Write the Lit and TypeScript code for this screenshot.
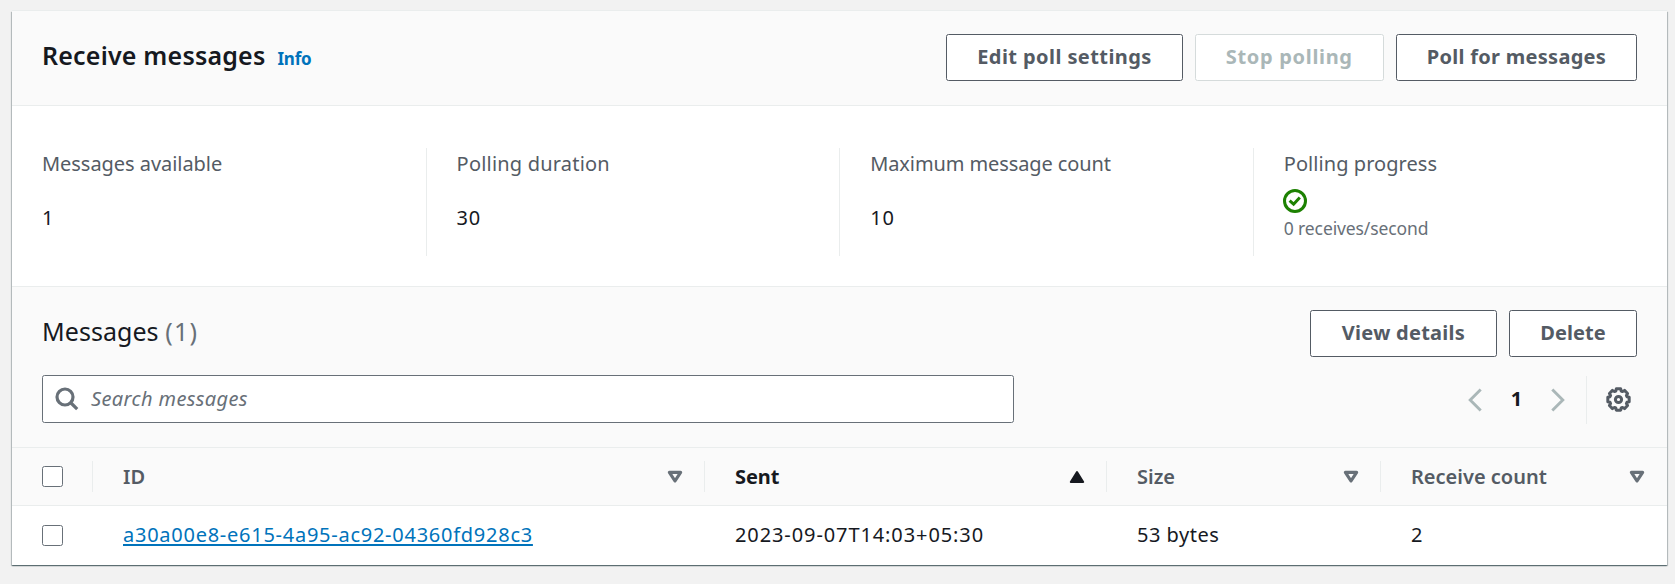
import { LitElement, html, css, svg } from "lit";
import { customElement, property } from "lit/decorators.js";

@customElement("sort-icon")
class SortIcon extends LitElement {
  @property({ type: Boolean }) active = false;
  static styles = css`
    :host { display: block; width: 16px; height: 14px; }
    svg { display: block; }
  `;
  render() {
    return html`<svg width="16" height="14" viewBox="0 0 16 14">
      ${this.active
        ? svg`<path d="M8 2 14.2 12H1.8Z" fill="#16191f" stroke="#16191f" stroke-width="2" stroke-linejoin="round"/>`
        : svg`<path d="M2.4 2.3h11.2L8 11Z" fill="none" stroke="#687078" stroke-width="3.2" stroke-linejoin="round"/>`}
    </svg>`;
  }
}

@customElement("app-root")
class AppRoot extends LitElement {
  static styles = css`
    :host {
      display: block;
      box-sizing: border-box;
      height: 584px;
      padding: 11px 8px 0 12px;
      background: #f2f2f2;
      font-family: "Noto Sans", "Open Sans", sans-serif;
      font-size: 20px;
      line-height: 28px;
      color: #16191f;
      overflow: hidden;
    }
    * { box-sizing: border-box; }
    svg { display: block; flex: none; }
    .card {
      height: 554px;
      background: #fff;
      box-shadow: 0 -1px 0 #eaeded, 0 1px 1px rgba(0, 28, 36, 0.4),
        1px 1px 1px rgba(0, 28, 36, 0.2), -1px 1px 1px rgba(0, 28, 36, 0.2);
    }
    .header {
      display: flex;
      justify-content: space-between;
      height: 95px;
      padding: 23px 30px 0 30px;
      background: #fafafa;
      border-bottom: 1px solid #eaeded;
    }
    h2 {
      margin: 0;
      display: flex;
      align-items: baseline;
      font-size: 25px;
      line-height: 42px;
      font-weight: 600;
      letter-spacing: 0.2px;
      white-space: pre;
    }
    .info {
      margin-left: 12px;
      font-size: 17px;
      font-weight: 700;
      letter-spacing: -0.2px;
      color: #0073bb;
    }
    .actions { display: flex; gap: 12.5px; }
    .btn {
      height: 47px;
      padding: 0 0 2px;
      font: inherit;
      font-weight: 700;
      color: #545b64;
      background: #fff;
      border: 1px solid #545b64;
      border-radius: 2.5px;
      white-space: nowrap;
    }
    .edit { width: 237px; letter-spacing: 0.42px; padding-left: 1px; }
    .stop { width: 188.5px; letter-spacing: 0.68px; color: #aab7b8; border-color: #d5dbdb; }
    .poll { width: 241px; letter-spacing: 0.28px; }
    .view { width: 187px; letter-spacing: 0.27px; padding-left: 1px; }
    .delete { width: 128px; letter-spacing: 0.06px; }
    .metrics {
      display: grid;
      grid-template-columns: repeat(4, 413.6px);
      height: 180px;
      padding: 42px 0 30px;
    }
    .metric { padding: 2px 0 0 30px; height: 108px; }
    .metric + .metric { border-left: 1px solid #eaeded; }
    .label { color: #545b64; }
    .value { margin-top: 26px; }
    .ok { margin: 11px 0 0 -0.5px; }
    .rate { margin-top: 2px; font-size: 17.5px; line-height: 26px; letter-spacing: -0.12px; color: #687078; }
    .t-avail { letter-spacing: -0.05px; }
    .t-dur { letter-spacing: 0.2px; }
    .t-max { letter-spacing: -0.1px; }
    .t-prog { letter-spacing: 0.06px; }
    .t-num { letter-spacing: 0.8px; }
    .toolbar {
      height: 162px;
      padding: 23px 30px 0 30px;
      background: #fafafa;
      border-top: 1px solid #eaeded;
      border-bottom: 1px solid #eaeded;
    }
    .row { display: flex; justify-content: space-between; }
    .row h3 { margin: 0; font-size: 25px; line-height: 42px; font-weight: 400; white-space: pre; letter-spacing: 0.05px; }
    .count { color: #687078; letter-spacing: 1.3px; }
    .filters { margin-top: 18px; height: 48px; }
    .search {
      display: flex;
      align-items: center;
      width: 972px;
      padding: 0 12px;
      gap: 12px;
      background: #fff;
      border: 1px solid #687078;
      border-radius: 2.5px;
      color: #687078;
      font-style: italic;
    }
    .placeholder { letter-spacing: 0.38px; }
    .pages { display: flex; align-items: center; padding: 1px 6px 0 0; }
    .page { width: 69px; text-align: center; font-weight: 700; padding-bottom: 1px; }
    .gear { display: flex; align-items: center; height: 48px; margin-left: 21px; padding-left: 19px; border-left: 1px solid #eaeded; }
    .grid { display: grid; grid-template-columns: 80px 612px 402px 274px 1fr; align-items: center; }
    .thead { height: 58px; background: #fafafa; border-bottom: 1px solid #eaeded; }
    .th {
      display: flex;
      align-items: center;
      justify-content: space-between;
      height: 31px;
      padding: 0 21.5px 0 30px;
      border-left: 1px solid #eaeded;
      font-weight: 600;
      color: #545b64;
    }
    .th.sorted { color: #16191f; font-weight: 700; letter-spacing: -0.1px; }
    .th:last-child { padding-right: 22px; }
    .pick { padding-left: 30px; }
    .box { width: 21px; height: 21px; background: #fff; border: 1.4px solid #687078; border-radius: 2.5px; }
    .tbody { height: 60px; padding-bottom: 1px; }
    .td { padding-left: 31px; padding-bottom: 1px; white-space: nowrap; }
    .id { color: #0073bb; letter-spacing: 0.74px; text-decoration: underline; text-decoration-thickness: 2px; text-underline-offset: 2px; text-decoration-skip-ink: none; }
    .date { letter-spacing: 0.9px; }
    .size { letter-spacing: 0.5px; }
  `;

  private cols = [
    { name: "ID", sorted: false },
    { name: "Sent", sorted: true },
    { name: "Size", sorted: false },
    { name: "Receive count", sorted: false },
  ];

  private gearPath() {
    const n = 8;
    const pts: string[] = [];
    for (let i = 0; i < n; i++) {
      const a = (i * 2 * Math.PI) / n - Math.PI / 2;
      for (const [d, r] of [[-0.2, 10.9], [0.2, 10.9], [0.31, 8.9], [0.475, 8.9]]) {
        pts.push(`${(12.5 + r * Math.cos(a + d)).toFixed(2)} ${(12.5 + r * Math.sin(a + d)).toFixed(2)}`);
      }
    }
    return `M${pts.join("L")}Z`;
  }

  render() {
    return html`
      <div class="card">
        <div class="header">
          <h2>Receive messages<span class="info">Info</span></h2>
          <div class="actions">
            <button class="btn edit">Edit poll settings</button>
            <button class="btn stop" disabled>Stop polling</button>
            <button class="btn poll">Poll for messages</button>
          </div>
        </div>

        <div class="metrics">
          <div class="metric"><div class="label t-avail">Messages available</div><div class="value">1</div></div>
          <div class="metric"><div class="label t-dur">Polling duration</div><div class="value t-num">30</div></div>
          <div class="metric"><div class="label t-max">Maximum message count</div><div class="value t-num">10</div></div>
          <div class="metric">
            <div class="label t-prog">Polling progress</div>
            <svg class="ok" width="24" height="24" viewBox="0 0 24 24" fill="none" stroke="#1d8102" stroke-width="3">
              <circle cx="12" cy="12" r="10.5" />
              <path d="M6.6 11.6 10.6 15.2 16.8 8.4" />
            </svg>
            <div class="rate">0 receives/second</div>
          </div>
        </div>

        <div class="toolbar">
          <div class="row">
            <h3>Messages <span class="count">(1)</span></h3>
            <div class="actions">
              <button class="btn view">View details</button>
              <button class="btn delete">Delete</button>
            </div>
          </div>
          <div class="row filters">
            <div class="search">
              <svg width="24" height="24" viewBox="0 0 24 24" fill="none" stroke="#687078" stroke-width="3.2">
                <circle cx="10" cy="10" r="8" />
                <path d="M15.5 15.5 22.2 22.2" />
              </svg>
              <span class="placeholder">Search messages</span>
            </div>
            <div class="pages">
              <svg width="14" height="24" viewBox="0 0 14 24" fill="none" stroke="#aab7b8" stroke-width="2.9"><path d="M12.7 1.4 2.2 12 12.7 22.6" /></svg>
              <span class="page">1</span>
              <svg width="14" height="24" viewBox="0 0 14 24" fill="none" stroke="#aab7b8" stroke-width="2.9"><path d="M1.3 1.4 11.8 12 1.3 22.6" /></svg>
              <div class="gear">
                <svg width="25" height="25" viewBox="0 0 25 25" fill="none" stroke="#545b64" stroke-width="3" stroke-linejoin="round">
                  <path d=${this.gearPath()} />
                  <circle cx="12.5" cy="12.5" r="3.1" />
                </svg>
              </div>
            </div>
          </div>
        </div>

        <div class="grid thead">
          <div class="pick"><div class="box"></div></div>
          ${this.cols.map(
            (c) => html`<div class="th ${c.sorted ? "sorted" : ""}"><span>${c.name}</span><sort-icon ?active=${c.sorted}></sort-icon></div>`
          )}
        </div>
        <div class="grid tbody">
          <div class="pick"><div class="box"></div></div>
          <div class="td"><a class="id">a30a00e8-e615-4a95-ac92-04360fd928c3</a></div>
          <div class="td date">2023-09-07T14:03+05:30</div>
          <div class="td size">53 bytes</div>
          <div class="td">2</div>
        </div>
      </div>
    `;
  }
}
